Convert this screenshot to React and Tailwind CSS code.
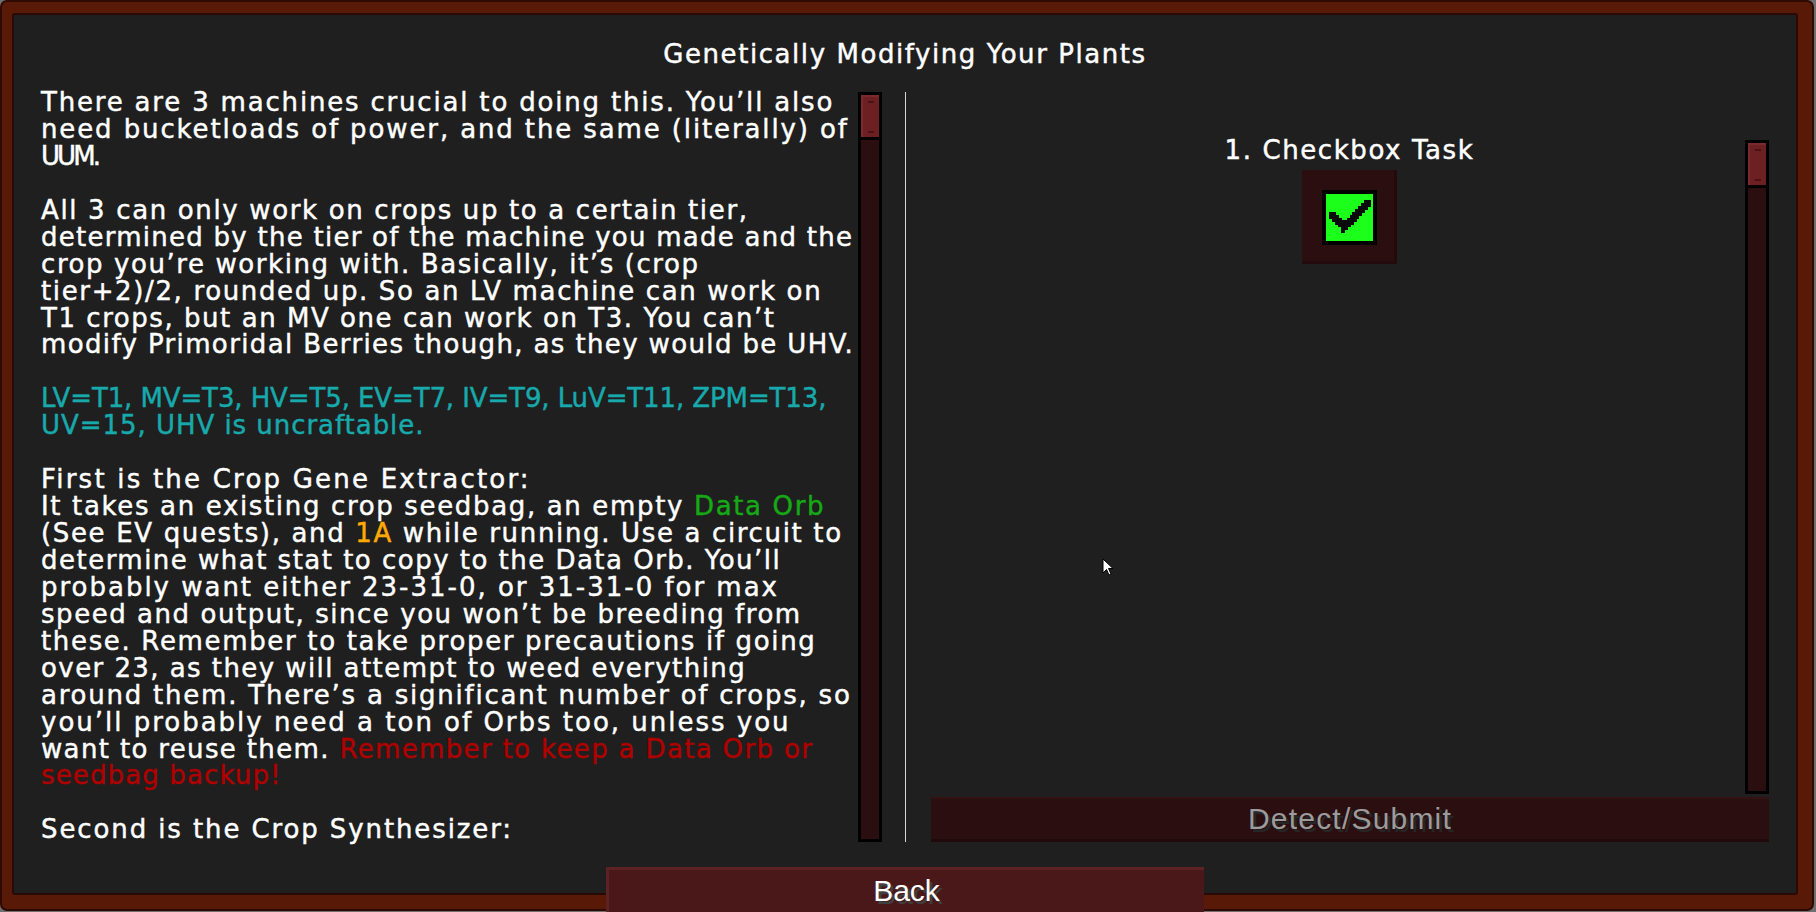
import React, { useLayoutEffect, useRef, useState } from "react";

const C = "text-[#17a9ab]";
const G = "text-[#16a916]";
const O = "text-[#ffaa00]";
const R = "text-[#b00000]";

// glyph advances of the game font, in font pixels
const MC = { " ": 4, i: 2, l: 3, t: 4, I: 4, f: 5, k: 5, ".": 2, ",": 2, "!": 2, ":": 2, ";": 2, "(": 5, ")": 5, "’": 2, "'": 2, "|": 2 };
const K = 2.92;
const mcWidth = (s) => [...s].reduce((a, c) => a + (MC[c] ?? 6), 0);

const lines = [
  ["There are 3 machines crucial to doing this. You’ll also"],
  ["need bucketloads of power, and the same (literally) of"],
  ["UUM."],
  [""],
  ["All 3 can only work on crops up to a certain tier,"],
  ["determined by the tier of the machine you made and the"],
  ["crop you’re working with. Basically, it’s (crop"],
  ["tier+2)/2, rounded up. So an LV machine can work on"],
  ["T1 crops, but an MV one can work on T3. You can’t"],
  ["modify Primoridal Berries though, as they would be UHV."],
  [""],
  [["LV=T1, MV=T3, HV=T5, EV=T7, IV=T9, LuV=T11, ZPM=T13,", C]],
  [["UV=15, UHV is uncraftable.", C]],
  [""],
  ["First is the Crop Gene Extractor:"],
  ["It takes an existing crop seedbag, an empty ", ["Data Orb", G]],
  ["(See EV quests), and ", ["1A", O], " while running. Use a circuit to"],
  ["determine what stat to copy to the Data Orb. You’ll"],
  ["probably want either 23-31-0, or 31-31-0 for max"],
  ["speed and output, since you won’t be breeding from"],
  ["these. Remember to take proper precautions if going"],
  ["over 23, as they will attempt to weed everything"],
  ["around them. There’s a significant number of crops, so"],
  ["you’ll probably need a ton of Orbs too, unless you"],
  ["want to reuse them. ", ["Remember to keep a Data Orb or", R]],
  [["seedbag backup!", R]],
  [""],
  ["Second is the Crop Synthesizer:"],
];

// a few lines measured straight off the screen
const widthOverride = { 2: 60, 4: 706, 5: 811, 8: 733, 18: 736 };

// stretches a line so it takes the width the game font would give it
const FitText = ({ text, target, children, className = "" }) => {
  const ref = useRef(null);
  const [ls, setLs] = useState(0);
  useLayoutEffect(() => {
    const el = ref.current;
    if (!el || !text) return;
    const w = el.getBoundingClientRect().width;
    const goal = target ?? (mcWidth(text) - 1) * K;
    setLs((goal - w) / Math.max(1, text.length - 1));
  }, [text, target]);
  return (
    <span
      ref={ref}
      className={`inline-block whitespace-pre [-webkit-text-stroke:0.45px_currentColor] ${className}`}
      style={{ letterSpacing: `${ls}px` }}
    >
      {children ?? text}
    </span>
  );
};

const Scrollbar = ({ className = "" }) => (
  <div className={`w-[24px] flex flex-col border-x-[3px] border-y-[3px] border-black bg-[#2a0e10] ${className}`}>
    <div className="h-[42px] shrink-0 bg-[#6c2022] border-l-[2px] border-t-[2px] border-[#7a2a2c] flex flex-col items-center justify-between py-[4px]">
      <div className="w-[6px] h-[2px] bg-[#4a1214]" />
      <div className="w-[6px] h-[2px] bg-[#4a1214]" />
    </div>
    <div className="h-[3px] shrink-0 bg-black" />
  </div>
);

const checkBlocks = [
  [13, 2], [12, 3], [11, 4], [10, 5], [9, 6], [8, 7], [7, 8], [6, 9], [5, 10],
  [1, 6], [2, 7], [3, 8], [4, 9],
];

const Checkmark = () => (
  <svg viewBox="0 0 16 16" className="w-full h-full" shapeRendering="crispEdges">
    {checkBlocks.map(([x, y], i) => (
      <rect key={i} x={x} y={y} width="2.4" height="2.4" fill="#0a0a0a" />
    ))}
    <rect x="5" y="12" width="1.4" height="1.4" fill="#0a0a0a" />
  </svg>
);

export default function App() {
  return (
    <div className="relative w-[1816px] h-[912px] bg-[#6f6f6f] overflow-hidden font-['DejaVu_Sans',sans-serif]">
      {/* frame */}
      <div className="w-[1814px] h-[911px] rounded-[7px] bg-[#581907] border-2 border-[#2e0a03] pt-[11px] pl-[10px] pr-[14px] pb-[14px]">
        <div className="h-full rounded-[3px] bg-[#1f1f1f] border-2 border-[#2a0904] flex flex-col px-[27px]">
          {/* title */}
          <div className="h-[77px] shrink-0 pt-[26px] text-center text-white text-[26px] leading-[27px]">
            <FitText text="Genetically Modifying Your Plants" />
          </div>

          <div className="h-[750px] flex">
            {/* left column */}
            <div className="w-[817px] text-white text-[26px] leading-[26.94px] whitespace-nowrap -mt-[3px]">
              {lines.map((segs, i) => {
                const text = segs.map((s) => (typeof s === "string" ? s : s[0])).join("");
                return (
                  <div key={i} className="h-[26.94px]">
                    {text && (
                      <FitText text={text} target={widthOverride[i]}>
                        {segs.map((s, j) =>
                          typeof s === "string" ? (
                            <span key={j}>{s}</span>
                          ) : (
                            <span key={j} className={s[1]}>{s[0]}</span>
                          )
                        )}
                      </FitText>
                    )}
                  </div>
                );
              })}
            </div>
            <Scrollbar className="h-[750px] shrink-0" />

            <div className="w-[1px] bg-[#d6d6d6] ml-[23px] mr-[25px] shrink-0" />

            {/* right panel */}
            <div className="flex-1 flex flex-col">
              <div className="flex-1 flex pt-[48px] pb-[3px]">
                <div className="flex-1 pl-[23px] flex flex-col items-center">
                  <div className="-mt-[3px] text-white text-[26px] leading-[27px]">
                    <FitText text="1. Checkbox Task" />
                  </div>
                  <div className="mt-[6px] w-[95px] h-[94px] bg-[#2b0e10] border-r-[3px] border-b-[3px] border-[#230a0c] flex items-center justify-center">
                    <div className="w-[55px] h-[55px] bg-black p-[4px] ml-[3px] mt-[3px]">
                      <div className="w-full h-full bg-[#1bff1b]">
                        <Checkmark />
                      </div>
                    </div>
                  </div>
                </div>
                <Scrollbar className="shrink-0" />
              </div>
              <div className="h-[45px] shrink-0 bg-[#2b0e10] border-t-[2px] border-[#331214] border-b-[3px] border-b-[#200a0b] flex items-center justify-center">
                <span className="font-['Liberation_Sans',sans-serif] text-[30px] leading-none tracking-[1.2px] text-[#9c9c9c] [text-shadow:3px_3px_0_#262626]">
                  Detect/Submit
                </span>
              </div>
            </div>
          </div>
        </div>
      </div>

      {/* back button overlaps the frame */}
      <div className="absolute left-[606px] top-[867px] w-[598px] h-[45px] bg-[#4b1819] border-t-[3px] border-l-[3px] border-[#5c2224] flex items-center justify-center">
        <span className="font-['Liberation_Sans',sans-serif] text-[30px] leading-none text-white [text-shadow:3px_3px_0_#3f3f3f]">
          Back
        </span>
      </div>

      {/* mouse cursor */}
      <svg className="absolute left-[1102px] top-[558px]" width="12" height="19" viewBox="0 0 12 19">
        <path d="M1 1 L1 15 L4.5 11.5 L7 17 L9 16 L6.5 10.5 L11 10.5 Z" fill="#fff" stroke="#000" strokeWidth="1" />
      </svg>
    </div>
  );
}
